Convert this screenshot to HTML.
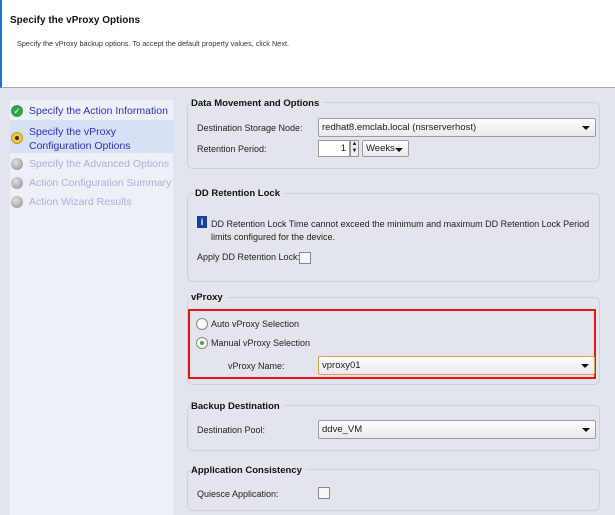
<!DOCTYPE html>
<html><head><style>
*{margin:0;padding:0;box-sizing:border-box}
body{width:615px;height:515px;overflow:hidden;background:#e3e5ec;font-family:"Liberation Sans",sans-serif;font-size:9px;color:#222;position:relative}
.a{position:absolute}
.hdr{left:0;top:0;width:615px;height:88px;background:#fff;border-left:2px solid #1a73d9;border-bottom:1px solid #a9abb0}
.grp{position:absolute;left:187px;width:413px;border:1px solid #cfd1d8;border-radius:6px}
.gt{position:absolute;font-weight:bold;font-size:9.5px;background:#e3e5ec;padding-right:4px;color:#111}
.lbl{position:absolute;font-size:9px;color:#222}
.dd{position:absolute;background:linear-gradient(#fdfdfd,#e9e9ec);border:1px solid #9a9ca3;border-radius:2px;font-size:9.5px;padding:0 3px;line-height:17px;height:19px}
.dd:after{content:"";position:absolute;right:5px;top:7px;border-left:4px solid transparent;border-right:4px solid transparent;border-top:4px solid #111}
.cb{position:absolute;width:12px;height:12px;border:1px solid #888;background:#f7f7f7}
.nav{position:absolute;left:29px;font-size:10.5px;color:#2a2fc8}
.dis{color:#a7b3d5}
.dot{position:absolute;left:11px;width:12px;height:12px;border-radius:50%;background:radial-gradient(circle at 40% 35%,#e0e0e0,#8c8c8c)}
</style></head><body>
<div class="a hdr"></div>
<div class="a" style="left:10px;top:15px;font-weight:bold;font-size:10px;color:#111">Specify the vProxy Options</div>
<div class="a" style="left:17px;top:39px;font-size:7.3px;color:#333">Specify the vProxy backup options. To accept the default property values, click Next.</div>

<div class="a" style="left:10px;top:100px;width:163px;height:415px;background:#eef0f7"></div>
<div class="a" style="left:10px;top:120px;width:163px;height:33px;background:#d6e1f5"></div>
<div class="a" style="left:11px;top:105px;width:12px;height:12px;border-radius:50%;background:#2ea34a;color:#fff;font-size:9px;text-align:center;line-height:12px">✓</div>
<div class="nav" style="top:105px">Specify the Action Information</div>
<div class="a" style="left:11px;top:132px;width:12px;height:12px;border-radius:50%;background:#f6c640;border:1px solid #c99a1c"><div style="position:absolute;left:3px;top:3px;width:4px;height:4px;border-radius:50%;background:#333"></div></div>
<div class="nav" style="top:125px;line-height:14px">Specify the vProxy<br>Configuration Options</div>
<div class="dot" style="top:158px"></div><div class="nav dis" style="top:158px">Specify the Advanced Options</div>
<div class="dot" style="top:177px"></div><div class="nav dis" style="top:177px">Action Configuration Summary</div>
<div class="dot" style="top:196px"></div><div class="nav dis" style="top:196px">Action Wizard Results</div>

<div class="grp" style="top:102px;height:67px"></div>
<div class="gt" style="left:191px;top:98px">Data Movement and Options</div>
<div class="lbl" style="left:197px;top:123px">Destination Storage Node:</div>
<div class="dd" style="left:318px;top:118px;width:278px">redhat8.emclab.local (nsrserverhost)</div>
<div class="lbl" style="left:197px;top:144px">Retention Period:</div>
<div class="a" style="left:318px;top:140px;width:32px;height:17px;background:#fff;border:1px solid #999;font-size:9.5px;text-align:right;padding:2px 3px">1</div>
<div class="a" style="left:350px;top:140px;width:9px;height:17px;background:#eee;border:1px solid #999;font-size:6px;line-height:7px;text-align:center">▲<br>▼</div>
<div class="dd" style="left:362px;top:140px;width:47px;height:17px;line-height:15px">Weeks</div>

<div class="grp" style="top:193px;height:89px"></div>
<div class="gt" style="left:195px;top:188px">DD Retention Lock</div>
<div class="a" style="left:197px;top:216px;width:10px;height:12px;background:#1a3e9c;color:#fff;font-weight:bold;font-size:9px;text-align:center;line-height:12px">i</div>
<div class="lbl" style="left:211px;top:218px;line-height:13px">DD Retention Lock Time cannot exceed the minimum and maximum DD Retention Lock Period<br>limits configured for the device.</div>
<div class="lbl" style="left:197px;top:252px">Apply DD Retention Lock:</div>
<div class="cb" style="left:299px;top:252px"></div>

<div class="grp" style="top:297px;height:88px"></div>
<div class="gt" style="left:191px;top:292px">vProxy</div>
<div class="a" style="left:188px;top:309px;width:408px;height:70px;border:2px solid #e8141a"></div>
<div class="a" style="left:196px;top:318px;width:12px;height:12px;border-radius:50%;border:1px solid #888;background:#fafafa"></div>
<div class="lbl" style="left:211px;top:319px">Auto vProxy Selection</div>
<div class="a" style="left:196px;top:337px;width:12px;height:12px;border-radius:50%;border:1px solid #888;background:#fafafa"><div style="position:absolute;left:3px;top:3px;width:4px;height:4px;border-radius:50%;background:#3cae3c"></div></div>
<div class="lbl" style="left:211px;top:338px">Manual vProxy Selection</div>
<div class="lbl" style="left:228px;top:361px">vProxy Name:</div>
<div class="dd" style="left:318px;top:356px;width:277px;border-color:#d9a24a">vproxy01</div>

<div class="grp" style="top:405px;height:46px"></div>
<div class="gt" style="left:191px;top:401px">Backup Destination</div>
<div class="lbl" style="left:197px;top:425px">Destination Pool:</div>
<div class="dd" style="left:318px;top:420px;width:278px">ddve_VM</div>

<div class="grp" style="top:469px;height:42px"></div>
<div class="gt" style="left:191px;top:465px">Application Consistency</div>
<div class="lbl" style="left:197px;top:489px">Quiesce Application:</div>
<div class="cb" style="left:318px;top:487px"></div>
</body></html>
